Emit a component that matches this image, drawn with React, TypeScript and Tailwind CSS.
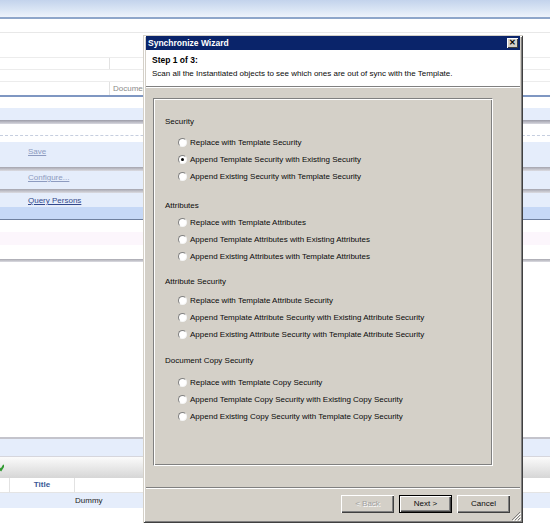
import React from "react";

type Section = { title: string; options: string[]; gap: string; lead: string };

const sections: Section[] = [
  {
    title: "Security",
    gap: "mt-0",
    lead: "mt-[4px]",
    options: [
      "Replace with Template Security",
      "Append Template Security with Existing Security",
      "Append Existing Security with Template Security",
    ],
  },
  {
    title: "Attributes",
    gap: "mt-[12px]",
    lead: "mt-0",
    options: [
      "Replace with Template Attributes",
      "Append Template Attributes with Existing Attributes",
      "Append Existing Attributes with Template Attributes",
    ],
  },
  {
    title: "Attribute Security",
    gap: "mt-[8px]",
    lead: "mt-[2px]",
    options: [
      "Replace with Template Attribute Security",
      "Append Template Attribute Security with Existing Attribute Security",
      "Append Existing Attribute Security with Template Attribute Security",
    ],
  },
  {
    title: "Document Copy Security",
    gap: "mt-[9px]",
    lead: "mt-[5px]",
    options: [
      "Replace with Template Copy Security",
      "Append Template Copy Security with Existing Copy Security",
      "Append Existing Copy Security with Template Copy Security",
    ],
  },
];

const checkedLabel = "Append Template Security with Existing Security";

function Radio({ label }: { label: string }) {
  const checked = label === checkedLabel;
  return (
    <div className="flex h-[17px] items-center pl-[13px]">
      <span className="flex size-[9px] shrink-0 items-center justify-center rounded-full border border-[#808080] border-r-[#f4f4f4] border-b-[#f4f4f4] bg-white">
        {checked && <span className="size-[3px] rounded-full bg-black" />}
      </span>
      <span className="ml-[3px] text-[#0a0a0a]">{label}</span>
    </div>
  );
}

function WinButton({
  children,
  primary,
  disabled,
}: {
  children: React.ReactNode;
  primary?: boolean;
  disabled?: boolean;
}) {
  return (
    <div
      className={
        primary
          ? "flex h-[18px] w-[53px] items-center justify-center border border-black bg-[#d4d0c8] shadow-[inset_1px_1px_#ffffff,inset_-1px_-1px_#404040,inset_-2px_-2px_#808080]"
          : "flex h-[18px] w-[53px] items-center justify-center bg-[#d4d0c8] shadow-[inset_1px_1px_#ffffff,inset_-1px_-1px_#404040,inset_-2px_-2px_#808080]"
      }
    >
      <span
        className={
          disabled
            ? "text-[#a0a0a0] [text-shadow:1px_1px_#ffffff]"
            : "text-[#0a0a0a]"
        }
      >
        {children}
      </span>
    </div>
  );
}

function Wizard() {
  return (
    <div className="absolute left-[143px] top-[35px] flex h-[488px] w-[380px] flex-col bg-[#d4d0c8] px-[3px] pt-px pb-[3px] shadow-[inset_1px_1px_#d4d0c8,inset_-1px_-1px_#404040,inset_2px_2px_#ffffff,inset_-2px_-2px_#808080]">
      <div className="flex h-[14px] shrink-0 items-center justify-between bg-[#0a246a] pl-[2px] pr-[2px]">
        <span className="text-[8.5px] font-bold text-white">Synchronize Wizard</span>
        <span className="flex h-[10px] w-[11px] items-center justify-center bg-[#d4d0c8] text-[8px] font-bold leading-none text-black shadow-[inset_1px_1px_#ffffff,inset_-1px_-1px_#404040]">
          ✕
        </span>
      </div>

      <div className="flex h-[36px] shrink-0 flex-col bg-white pl-[6px] pt-[4px]">
        <span className="text-[8.5px] font-bold leading-[13px] text-black">Step 1 of 3:</span>
        <span className="leading-[13px] text-[#0a0a0a]">
          Scan all the Instantiated objects to see which ones are out of sync with the Template.
        </span>
      </div>
      <div className="h-[2px] shrink-0 border-t border-[#808080] border-b border-b-white" />

      <div className="flex shrink-0 flex-col px-[7px] pt-[10px]">
        <div className="h-[368px] w-[340px] shrink-0 border border-[#808080] border-r-white border-b-white pl-[11px] pt-[14px] shadow-[inset_1px_1px_#ffffff,inset_-1px_-1px_#808080]">
          {sections.map((s) => (
            <div key={s.title} className={s.gap}>
              <div className="flex h-[17px] items-center text-[#0a0a0a]">{s.title}</div>
              <div className={s.lead}>
                {s.options.map((o) => (
                  <Radio key={o} label={o} />
                ))}
              </div>
            </div>
          ))}
        </div>

        <div className="-mx-[7px] mt-[21px] h-[2px] shrink-0 border-t border-[#808080] border-b border-b-white" />

        <div className="mt-[6px] flex shrink-0 justify-end gap-[5px] pr-[3px]">
          <WinButton disabled>&lt; Back</WinButton>
          <WinButton primary>Next &gt;</WinButton>
          <WinButton>Cancel</WinButton>
        </div>
      </div>

      <svg width="10" height="10" viewBox="0 0 10 10" className="absolute bottom-[2px] right-[2px]">
        <path d="M9 1L1 9M9 4L4 9M9 7L7 9" stroke="#808080" strokeWidth="1" />
        <path d="M10 2L2 10M10 5L5 10M10 8L8 10" stroke="#ffffff" strokeWidth="1" />
      </svg>
    </div>
  );
}

function LinkRow({ text, muted, h }: { text: string; muted?: boolean; h: string }) {
  return (
    <div className={`${h} bg-[#e5edfb] pl-[28px]`}>
      <span className={muted ? "text-[#8d9bc0] underline" : "text-[#33498c] underline"}>{text}</span>
    </div>
  );
}

export default function App() {
  return (
    <div className="relative h-[526px] w-[550px] overflow-hidden bg-white font-['Liberation_Sans',Arial,sans-serif] text-[8px] leading-none">
      <div className="h-[17px] bg-[linear-gradient(180deg,#c3d3ec_0%,#dbe6f5_60%,#eef3fb_100%)]" />
      <div className="h-[2px] bg-[#8ea6ca]" />
      <div className="h-[14px] border-b border-[#e8e8e8]" />
      <div className="h-[25px] border-b border-[#ececec]" />
      <div className="flex h-[12px] border-b border-[#ececec]">
        <div className="w-[110px] border-r border-[#e2e2e2]" />
      </div>
      <div className="h-[12px] border-b border-[#ececec]" />
      <div className="flex h-[13px]">
        <div className="w-[110px] border-r border-[#e2e2e2]" />
        <span className="pl-[3px] pt-[3px] text-[#8a8a8a]">Document</span>
      </div>
      <div className="h-[2px] bg-[#7f97c2]" />
      <div className="h-[11px]" />
      <div className="h-[12px] bg-[#e5edfb]" />
      <div className="h-[4px] bg-gradient-to-b from-[#9c9ca8] to-[#d9d9e0]" />
      <div className="h-[12px] border-b border-dashed border-[#c6cedf]" />
      <div className="h-[6px]" />
      <LinkRow text="Save" muted h="h-[25px] pt-[6px]" />
      <div className="h-[4px] bg-gradient-to-b from-[#a4a4ae] to-[#dcdce2]" />
      <LinkRow text="Configure..." muted h="h-[18px] pt-[3px]" />
      <div className="h-[4px] bg-gradient-to-b from-[#a4a4ae] to-[#dcdce2]" />
      <LinkRow text="Query Persons" h="h-[14px] pt-[4px]" />
      <div className="h-[12px] bg-[#c6d8f6]" />
      <div className="h-px bg-[#6e7f9e]" />
      <div className="h-[12px]" />
      <div className="h-[13px] bg-[#fcf6fc]" />
      <div className="h-[14px]" />
      <div className="h-[3px] bg-gradient-to-b from-[#a8a8b0] to-[#dcdce2]" />
      <div className="h-[175px]" />
      <div className="h-[2px] bg-[#c4c4cc]" />
      <div className="h-[17px] bg-[#e5edfb]" />
      <div className="h-px bg-[#d6d6dc]" />
      <div className="flex h-[21px] items-center bg-gradient-to-b from-[#fbfbfb] to-[#d6d6d6]">
        <svg width="5" height="8" viewBox="0 0 5 8" className="-ml-[1px]">
          <path d="M0 4L2 6L5 1" stroke="#2f9a2f" strokeWidth="2" fill="none" />
        </svg>
      </div>
      <div className="flex h-[15px] border-b border-[#e4e4e4]">
        <div className="w-[10px] border-r border-[#e2e2e2]" />
        <div className="flex w-[65px] items-center justify-center border-r border-[#e2e2e2] font-bold text-[#3a5896]">
          Title
        </div>
      </div>
      <div className="flex h-[15px] items-center bg-[#e5edfb] pl-[75px] text-[#222]">Dummy</div>

      <Wizard />
    </div>
  );
}
